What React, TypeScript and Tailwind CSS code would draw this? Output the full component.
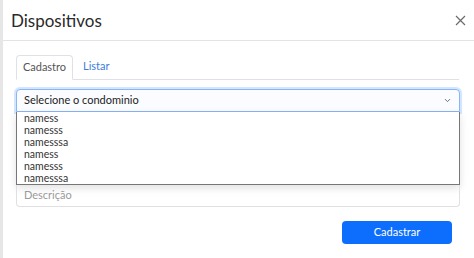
import { ChevronDown } from "lucide-react"

const options = ["namess", "namesss", "namesssa", "namess", "namesss", "namesssa"]

export default function App() {
  return (
    <div
      className="w-[474px] h-[258px] bg-[#e6e6e6] pl-[3px] overflow-hidden"
      style={{ fontFamily: 'Lato, "Noto Sans", sans-serif' }}
    >
      <div className="h-full bg-white flex flex-col">
        <div className="h-[41px] flex items-center justify-between pl-[8px] pr-[6px] border-b border-[#e3e3e3]">
          <h1 className="text-[17px] text-[#2a2a2a] leading-none">Dispositivos</h1>
          <button className="w-[16px] h-[16px] flex items-center justify-center text-[#6a6a6a]">
            <svg width="11" height="11" viewBox="0 0 11 11" fill="none" stroke="currentColor" strokeWidth="1.2">
              <path d="M1 1L10 10M10 1L1 10" />
            </svg>
          </button>
        </div>
        <div className="px-[13px] pt-[14px] flex flex-col">
          <div className="flex items-end border-b border-[#dee2e6] h-[25px] mr-[2px]">
            <div className="h-[25px] w-[57px] -mb-px flex items-center justify-center border border-[#dee2e6] border-b-white rounded-t-[4px] bg-white text-[11px] text-[#555]">
              Cadastro
            </div>
            <div className="h-[25px] px-[10px] flex items-center text-[11px] text-[#3b7ddd]">Listar</div>
          </div>
          <div className="mt-[9px] mr-[1px] relative">
            <div className="h-[23px] flex items-center justify-between pl-[7px] pr-[7px] border border-[#8ab4f8] rounded-t-[4px] bg-[#fbfcff] shadow-[0_0_0_2px_rgba(13,110,253,0.18)] text-[11px] text-[#222]">
              <span>Selecione o condominio</span>
              <ChevronDown className="w-[9px] h-[9px] text-[#555]" strokeWidth={2.2} />
            </div>
            <div className="h-[73px] border border-[#777] border-t-0 bg-white pl-[7px] shadow-[0_3px_8px_rgba(0,0,0,0.12)] flex flex-col">
              {options.map((o, i) => (
                <div key={i} className="h-[12px] leading-[12px] text-[10.5px] text-[#333]">{o}</div>
              ))}
            </div>
            <div className="h-[22px] flex items-center pl-[7px] border border-[#e0e0e0] border-t-0 rounded-b-[4px] text-[11px] text-[#9a9a9a]">
              Descrição
            </div>
          </div>
          <div className="flex justify-end mt-[14px] mr-[9px]">
            <button className="w-[110px] h-[23px] rounded-[4px] bg-[#0d6efd] text-white text-[11px]">Cadastrar</button>
          </div>
        </div>
      </div>
    </div>
  )
}
